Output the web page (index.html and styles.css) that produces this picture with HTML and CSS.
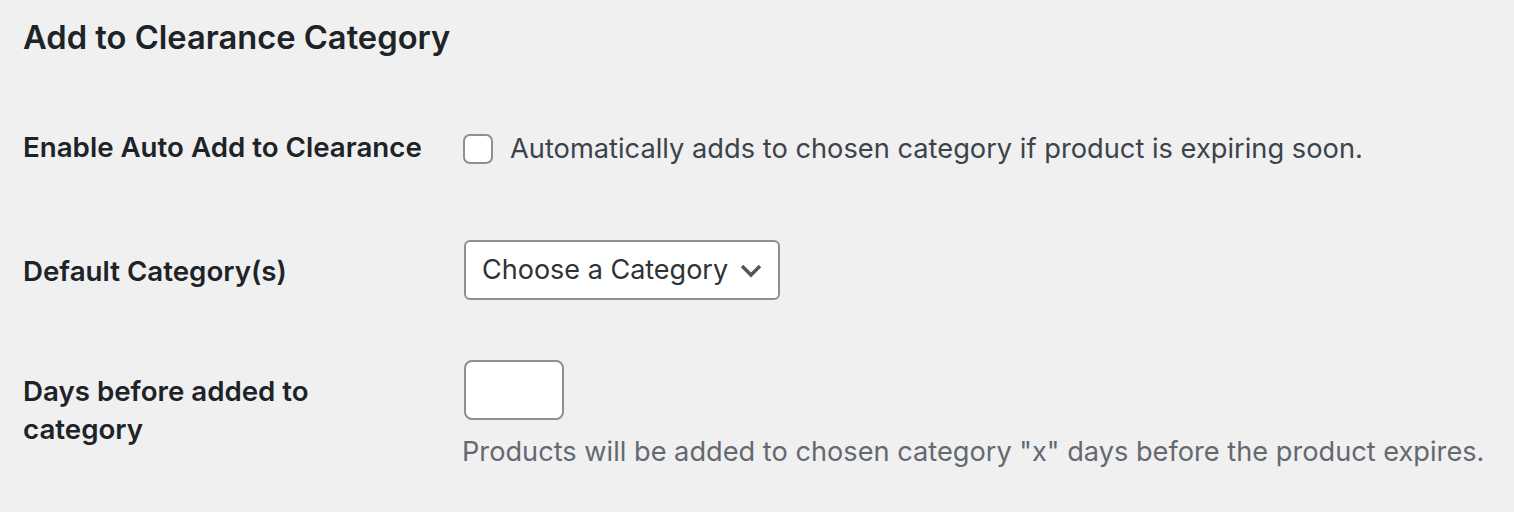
FILE: index.html
```html
<!DOCTYPE html>
<html>
<head>
<meta charset="utf-8">
<link rel="stylesheet" href="styles.css">
</head>
<body>
<div class="wrap">
  <h2 class="title">Add to Clearance Category</h2>
  <div class="form-table">
    <div class="row row-first">
      <div class="th">Enable Auto Add to Clearance</div>
      <div class="td">
        <label class="check-line"><span class="checkbox"></span><span class="check-text">Automatically adds to chosen category if product is expiring soon.</span></label>
      </div>
    </div>
    <div class="row">
      <div class="th">Default Category(s)</div>
      <div class="td">
        <div class="select"><span class="select-text">Choose a Category</span>
          <svg class="chevron" width="22" height="14" viewBox="0 0 22 14"><polyline points="2,2 11,11 20,2" fill="none" stroke="#50575e" stroke-width="3.4" stroke-linecap="butt" stroke-linejoin="miter"/></svg>
        </div>
      </div>
    </div>
    <div class="row">
      <div class="th">Days before added to<br>category</div>
      <div class="td">
        <div class="input"></div>
        <p class="description">Products will be added to chosen category "x" days before the product expires.</p>
      </div>
    </div>
  </div>
</div>
</body>
</html>
```

FILE: styles.css
```css
html, body {
  margin: 0;
  padding: 0;
  background: #f0f0f1;
}
body {
  font-family: Inter, "Noto Sans", "Liberation Sans", sans-serif;
  color: #3c434a;
  width: 1514px;
  height: 512px;
  overflow: hidden;
}
.wrap {
  padding-left: 23px;
}
.title {
  margin: 0;
  padding-top: 15px;
  font-size: 32.7px;
  line-height: 44px;
  font-weight: 600;
  color: #1d2327;
}
.form-table {
  margin-top: 29px;
}
.row {
  display: grid;
  grid-template-columns: 441px 1fr;
  padding-bottom: 30px;
}
.th {
  padding-top: 42px;
  font-size: 27.7px;
  line-height: 38px;
  font-weight: 600;
  color: #1d2327;
}
.row-first .th {
  padding-top: 40px;
}
.td {
  padding-top: 30px;
}
.check-line {
  display: flex;
  align-items: center;
  height: 62px;
}
.checkbox {
  width: 26px;
  height: 26px;
  border: 2px solid #8c8f94;
  border-radius: 7px;
  background: #fff;
  margin-left: -1px;
  flex: none;
}
.check-text {
  margin-left: 17px;
  font-size: 27.25px;
  line-height: 42px;
  color: #3c434a;
}
.select {
  display: flex;
  align-items: center;
  box-sizing: border-box;
  width: 316px;
  height: 60px;
  border: 2px solid #8c8f94;
  border-radius: 6px;
  background: #fff;
  padding-left: 16px;
  padding-right: 16px;
}
.select-text {
  flex: 1;
  font-size: 27px;
  color: #2c3338;
  line-height: 40px;
}
.chevron {
  flex: none;
  margin-top: 1px;
}
.input {
  box-sizing: border-box;
  width: 100px;
  height: 60px;
  border: 2px solid #8c8f94;
  border-radius: 8px;
  background: #fff;
}
.description {
  margin: 11px 0 0 -2px;
  font-size: 27.2px;
  line-height: 42px;
  color: #646970;
}
```
